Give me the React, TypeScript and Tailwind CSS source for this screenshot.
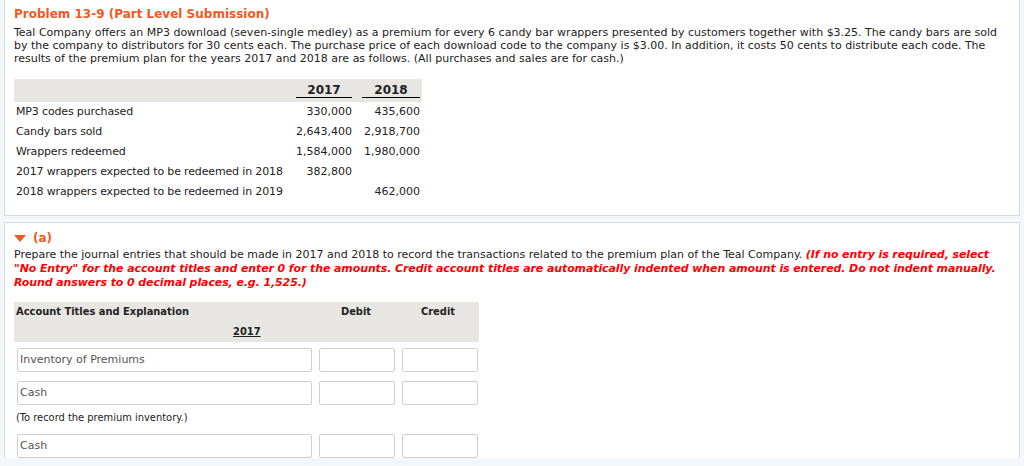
import React from "react";

const rows: { label: string; a: string; b: string }[] = [
  { label: "MP3 codes purchased", a: "330,000", b: "435,600" },
  { label: "Candy bars sold", a: "2,643,400", b: "2,918,700" },
  { label: "Wrappers redeemed", a: "1,584,000", b: "1,980,000" },
  { label: "2017 wrappers expected to be redeemed in 2018", a: "382,800", b: "" },
  { label: "2018 wrappers expected to be redeemed in 2019", a: "", b: "462,000" },
];

const Field = ({ value, wide }: { value?: string; wide?: boolean }) => (
  <div
    className={`h-[24px] rounded-[2px] border border-[#cfcfcf] bg-white px-[2px] text-[11px] leading-[22px] text-[#555] ${
      wide ? "w-[295px]" : "w-[76px]"
    }`}
  >
    {value}
  </div>
);

const EntryRow = ({ account }: { account: string }) => (
  <div className="flex gap-[7px] pl-[3px]">
    <Field value={account} wide />
    <Field />
    <Field />
  </div>
);

export default function App() {
  return (
    <div
      className="min-h-[466px] bg-[#f4f7f9] px-[4px] text-[11px] text-[#222]"
      style={{ fontFamily: '"DejaVu Sans", Verdana, sans-serif' }}
    >
      <section className="border border-t-0 border-[#d5dbe1] bg-white px-[9px] pb-[13px] pt-[7px]">
        <h2 className="text-[12px] font-bold leading-[14px] text-[#f05a22]">
          Problem 13-9 (Part Level Submission)
        </h2>
        <p className="mt-[5px] leading-[13px]">
          Teal Company offers an MP3 download (seven-single medley) as a premium for every 6 candy bar wrappers
          presented by customers together with $3.25. The candy bars are sold by the company to distributors for 30
          cents each. The purchase price of each download code to the company is $3.00. In addition, it costs 50
          cents to distribute each code. The results of the premium plan for the years 2017 and 2018 are as follows.
          (All purchases and sales are for cash.)
        </p>
        <div className="mt-[14px] w-[408px]">
          <div className="flex h-[23px] items-end justify-end gap-[10px] bg-[#e8e6e2] pr-[2px]">
            <div className="mb-[4px] w-[56px] border-b border-black text-center text-[12px] font-bold leading-[14px]">
              2017
            </div>
            <div className="mb-[4px] w-[58px] border-b border-black text-center text-[12px] font-bold leading-[14px]">
              2018
            </div>
          </div>
          {rows.map((r) => (
            <div key={r.label} className="flex h-[20px] items-center px-[2px]">
              <div className="flex-1 whitespace-nowrap tracking-[-0.15px]">{r.label}</div>
              <div className="w-[66px] text-right">{r.a}</div>
              <div className="w-[68px] text-right">{r.b}</div>
            </div>
          ))}
        </div>
      </section>

      <section className="mt-[6px] border border-b-0 border-[#d5dbe1] bg-white px-[9px] pt-[8px]">
        <div className="flex items-center gap-[7px] text-[12px] font-bold leading-[14px] text-[#f05a22]">
          <svg width="12" height="7" viewBox="0 0 12 7">
            <path d="M0 0 H12 L6 7 Z" fill="#f05a22" />
          </svg>
          <span>(a)</span>
        </div>
        <p className="mt-[3px] whitespace-nowrap leading-[14px]">
          Prepare the journal entries that should be made in 2017 and 2018 to record the transactions related to the
          premium plan of the Teal Company.{" "}
          <span className="font-bold italic tracking-[-0.1px] text-[#ff0000]">
            (If no entry is required, select
            <br />
            "No Entry" for the account titles and enter 0 for the amounts. Credit account titles are automatically
            indented when amount is entered. Do not indent manually.
            <br />
            Round answers to 0 decimal places, e.g. 1,525.)
          </span>
        </p>
        <div className="mt-[12px] w-[465px]">
          <div
            className="h-[40px] bg-[#e8e6e2] text-[11px] font-bold"
            style={{ fontFamily: '"DejaVu Sans Condensed", Tahoma, sans-serif' }}
          >
            <div className="flex pt-[3px] leading-[14px]">
              <div className="w-[300px] pl-[2px]">Account Titles and Explanation</div>
              <div className="w-[84px] text-center">Debit</div>
              <div className="w-[80px] text-center">Credit</div>
            </div>
            <div className="mt-[6px] pl-[219px] leading-[14px]">
              <span className="underline">2017</span>
            </div>
          </div>
          <div className="mt-[6px] flex flex-col">
            <EntryRow account="Inventory of Premiums" />
            <div className="mt-[9px]">
              <EntryRow account="Cash" />
            </div>
            <div
              className="h-[29px] pl-[2px] pt-[6px] leading-[14px]"
              style={{ fontFamily: '"DejaVu Sans Condensed", Tahoma, sans-serif' }}
            >
              (To record the premium inventory.)
            </div>
            <EntryRow account="Cash" />
          </div>
        </div>
      </section>
    </div>
  );
}
